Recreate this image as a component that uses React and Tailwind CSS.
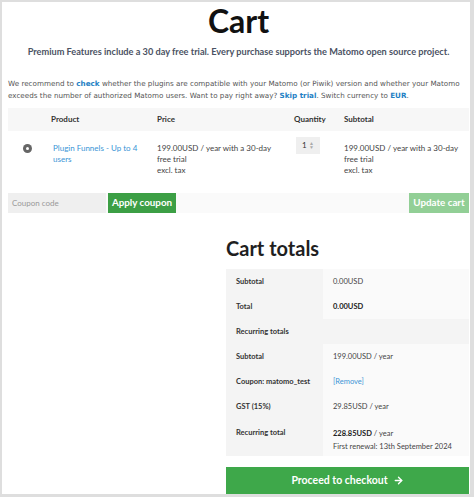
import { ArrowRight } from 'lucide-react';

const head = { fontFamily: 'Lato, "Open Sans", sans-serif' };
const body = { fontFamily: '"DejaVu Sans", Verdana, sans-serif' };

function TotalRow({ label, children, gray, tall }) {
  return (
    <div className={`grid grid-cols-[97px_1fr] ${tall ? 'min-h-[37px]' : 'h-[25px]'}`}>
      <div className={`bg-[#f4f4f4] pl-[10px] font-bold text-[#333] flex ${tall ? 'pt-[8px]' : 'items-center'}`}>{label}</div>
      <div className={`${gray ? 'bg-[#f4f4f4]' : 'bg-[#fafafa]'} pl-[10px] text-[#444] flex ${tall ? 'flex-col pt-[8px] leading-[13px]' : 'items-center'}`}>{children}</div>
    </div>
  );
}

export default function App() {
  return (
    <div className="w-[474px] h-[497px] overflow-hidden bg-white border-l-2 border-t-2 border-r-4 border-b-[3px] border-[#dedede]" style={head}>
      <div className="pl-[6px] pr-[1px]">
        <h1 className="text-center text-[32px] font-bold text-[#111] leading-[36px] pt-[1px]">Cart</h1>
        <p className="text-center text-[9.2px] font-bold text-[#4b5263] mt-[6px]">
          Premium Features include a 30 day free trial. Every purchase supports the Matomo open source project.
        </p>
        <p className="text-[7.2px] leading-[12px] text-[#555] mt-[19px] pr-[4px]" style={body}>
          We recommend to <span className="text-[#1e7fc4] font-bold">check</span> whether the plugins are compatible with your Matomo (or Piwik) version and whether your Matomo exceeds the number of authorized Matomo users. Want to pay right away? <span className="text-[#1e7fc4] font-bold">Skip trial</span>. Switch currency to <span className="text-[#1e7fc4] font-bold">EUR</span>.
        </p>

        <div className="mt-[6px] text-[8px] text-[#444]">
          <div className="grid grid-cols-[37px_104px_137px_50px_1fr] h-[23px] items-center bg-[#f7f7f7] font-bold text-[#333]">
            <div />
            <div className="pl-[6px]">Product</div>
            <div className="pl-2">Price</div>
            <div className="pl-2">Quantity</div>
            <div className="pl-2">Subtotal</div>
          </div>
          <div className="grid grid-cols-[37px_104px_137px_50px_1fr] pt-[12px] pb-[9px] leading-[11px]">
            <div className="flex justify-center pt-[1px] pl-[2px]">
              <span className="w-[9px] h-[9px] rounded-full bg-[#666] flex items-center justify-center">
                <span className="w-[3px] h-[3px] rounded-full bg-white" />
              </span>
            </div>
            <div className="pl-2 text-[#3a95d6]">Plugin Funnels - Up to 4<br />users</div>
            <div className="pl-2">199.00USD / year with a 30-day<br />free trial<br />excl. tax</div>
            <div className="pl-[10px]">
              <div className="w-[24px] h-[17px] -mt-[6px] bg-[#efefef] flex items-center justify-between px-[6px] text-[#333]">
                <span>1</span>
                <span className="text-[5px] text-[#aaa] leading-[4px] flex flex-col">
                  <span>▲</span><span>▼</span>
                </span>
              </div>
            </div>
            <div className="pl-2">199.00USD / year with a 30-day<br />free trial<br />excl. tax</div>
          </div>
          <div className="flex items-center justify-between bg-[#fafafa] h-[20px] mt-[8px]">
            <div className="flex h-full">
              <div className="w-[98px] h-full bg-[#efefef] flex items-center pl-[4px] text-[#999]">Coupon code</div>
              <button className="ml-[2px] w-[68px] h-full bg-[#3c9f45] text-white font-bold text-[9.8px]">Apply coupon</button>
            </div>
            <button className="w-[60px] h-full bg-[#92cf96] text-white font-bold text-[9.8px]">Update cart</button>
          </div>
        </div>

        <div className="ml-[218px] mt-[23px]">
          <h2 className="text-[20px] font-bold text-[#1f1f1f] leading-[24px]">Cart totals</h2>
          <div className="mt-[9px] text-[7.5px]">
            <TotalRow label="Subtotal"><span>0.00USD</span></TotalRow>
            <TotalRow label="Total"><span className="font-bold text-[#222]">0.00USD</span></TotalRow>
            <div className="h-[25px] bg-[#f4f4f4] flex items-center pl-[10px] font-bold text-[#333]">Recurring totals</div>
            <TotalRow label="Subtotal"><span>199.00USD / year</span></TotalRow>
            <TotalRow label="Coupon: matomo_test"><span className="text-[#3a95d6]">[Remove]</span></TotalRow>
            <TotalRow label="GST (15%)"><span>29.85USD / year</span></TotalRow>
            <TotalRow label="Recurring total" tall>
              <span><span className="font-bold text-[#222]">228.85USD</span> / year</span>
              <span>First renewal: 13th September 2024</span>
            </TotalRow>
          </div>
          <button className="mt-[11px] w-full h-[28px] bg-[#3ea84a] text-white font-bold text-[10.5px] flex items-center justify-center gap-[5px]">
            Proceed to checkout
            <ArrowRight className="w-[11px] h-[11px]" strokeWidth={3} />
          </button>
        </div>
      </div>
    </div>
  );
}
